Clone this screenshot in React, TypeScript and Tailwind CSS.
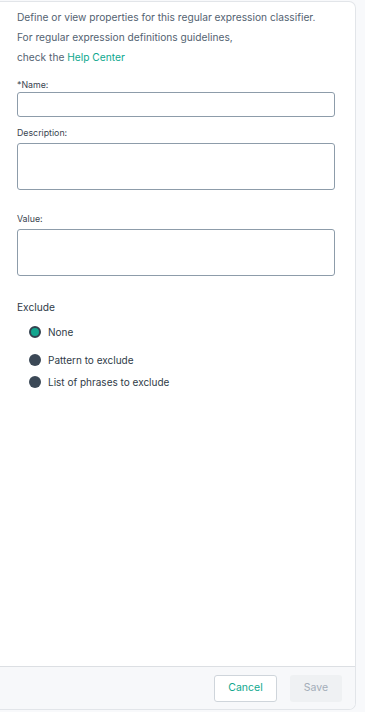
import React from "react";

const font = { fontFamily: "Inter, 'Noto Sans', sans-serif" };

function Radio({ label, checked }: { label: string; checked?: boolean }) {
  return (
    <div className="flex items-center gap-[7px]">
      <span
        className={
          checked
            ? "w-[12px] h-[12px] rounded-full bg-[#13a58e] border-[2px] border-[#33414f] box-border"
            : "w-[12px] h-[12px] rounded-full bg-[#3b4856] box-border"
        }
      />
      <span className="text-[10px] text-[#2f3b47] leading-[12px]">{label}</span>
    </div>
  );
}

export default function App() {
  return (
    <div className="w-[365px] h-[712px] bg-[#f8f9fb] pt-[1px] pb-[2px] pr-[9px]" style={font}>
      <div className="h-full bg-white border border-l-0 border-[#e2e5e9] rounded-r-[7px] flex flex-col overflow-hidden">
        <div className="flex-1 pl-[17px] pr-[20px] pt-[5px]">
          <div className="text-[10.2px] leading-[20px] text-[#536271]">
            <div>Define or view properties for this regular expression classifier.</div>
            <div>For regular expression definitions guidelines,</div>
            <div>
              check the <span className="text-[#0ea88e]">Help Center</span>
            </div>
          </div>
          <div className="mt-[13px] text-[8.8px] text-[#39444f] leading-[10px]">*Name:</div>
          <div className="mt-[2px] h-[25px] border border-[#8d9caa] rounded-[3px]" />
          <div className="mt-[11px] text-[8.8px] text-[#39444f] leading-[10px]">Description:</div>
          <div className="mt-[5px] h-[47px] border border-[#8d9caa] rounded-[3px]" />
          <div className="mt-[24px] text-[8.8px] text-[#39444f] leading-[10px]">Value:</div>
          <div className="mt-[5px] h-[47px] border border-[#8d9caa] rounded-[3px]" />
          <div className="mt-[25px] text-[10.2px] text-[#2f3b47] leading-[12px]">Exclude</div>
          <div className="mt-[13px] pl-[12px] flex flex-col">
            <Radio label="None" checked />
            <div className="h-[16px]" />
            <Radio label="Pattern to exclude" />
            <div className="h-[10px]" />
            <Radio label="List of phrases to exclude" />
          </div>
        </div>
        <div className="h-[43px] border-t border-[#dcdfe3] bg-[#f7f8fa] flex items-center justify-end gap-[13px] pr-[13px]">
          <button className="w-[63px] h-[27px] bg-white border border-[#cfd5db] rounded-[3px] text-[10.5px] text-[#0ea88e]">
            Cancel
          </button>
          <button className="w-[52px] h-[27px] bg-[#eff1f3] rounded-[3px] text-[10.5px] text-[#a3adb8]">
            Save
          </button>
        </div>
      </div>
    </div>
  );
}
